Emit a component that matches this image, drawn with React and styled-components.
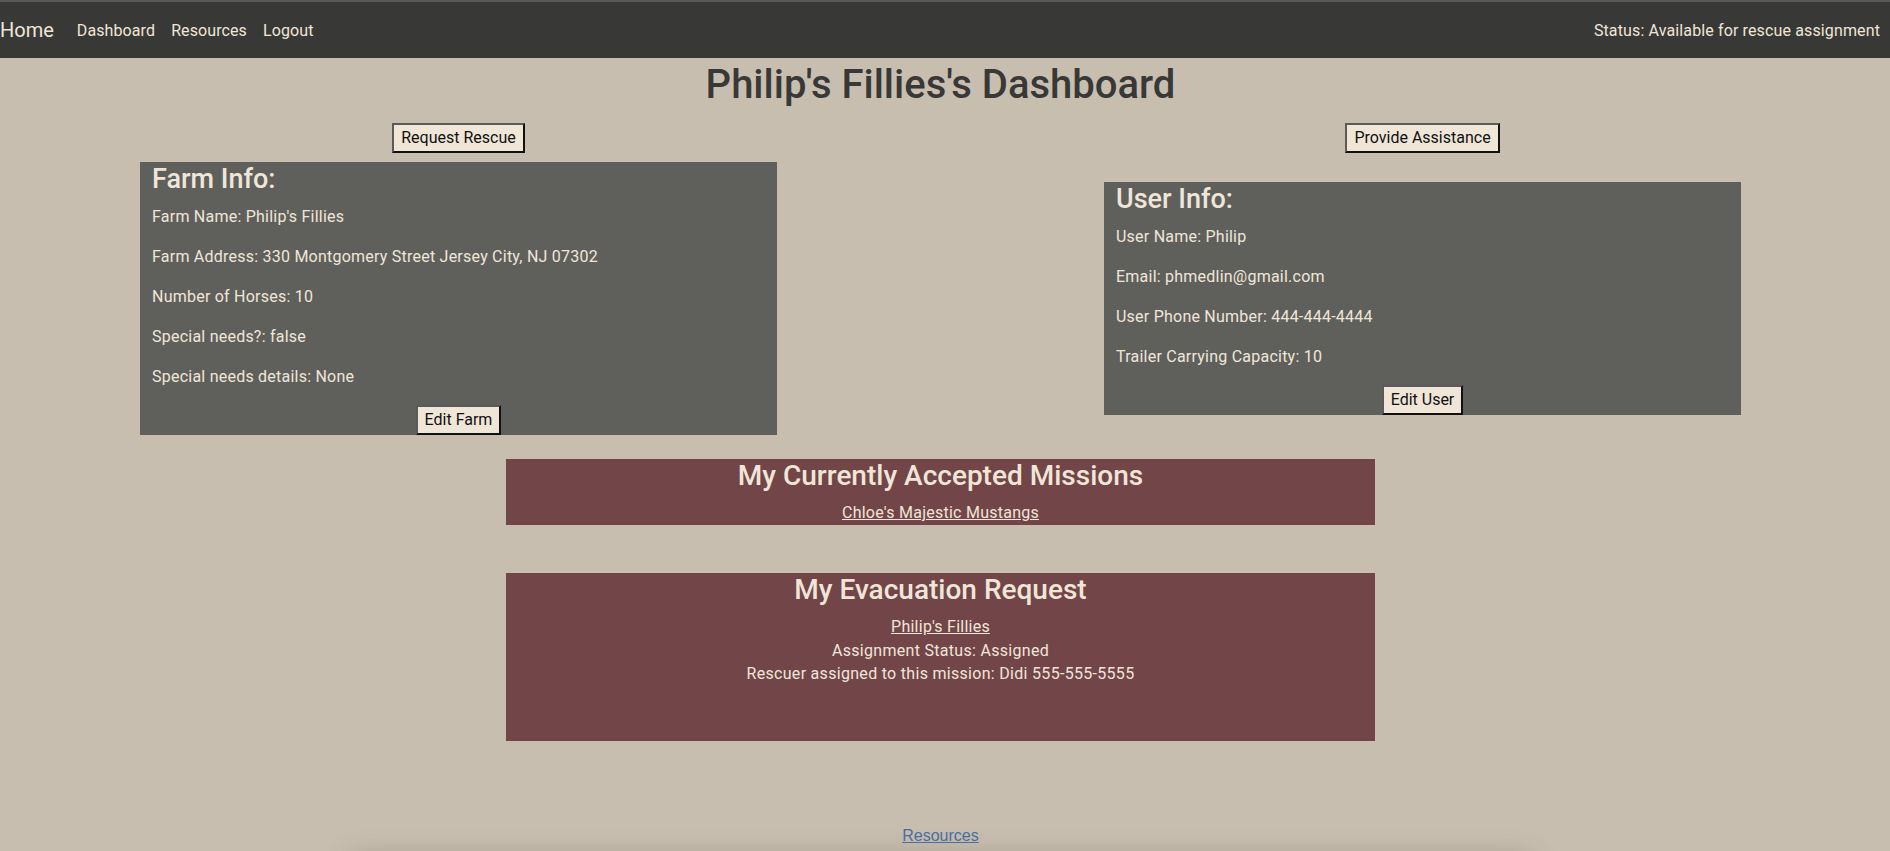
import React from "react";
import styled, { createGlobalStyle } from "styled-components";

const GlobalStyle = createGlobalStyle`
  html, body {
    margin: 0;
    padding: 0;
    background: #c8beb0;
    font-family: Roboto, "Liberation Sans", sans-serif;
    color: #f0e6d8;
  }
`;

const Page = styled.div`
  min-height: 100vh;
  overflow: hidden;
`;

const Nav = styled.nav`
  display: flex;
  align-items: center;
  height: 56px;
  background: #383836;
  border-top: 2px solid #5a5a5c;
  padding-right: 10px;
`;

const Brand = styled.a`
  font-size: 20px;
  color: #f0e6d8;
  text-decoration: none;
  margin-right: 23px;
`;

const NavLink = styled.a`
  font-size: 16px;
  letter-spacing: 0.1px;
  color: #f0e6d8;
  text-decoration: none;
  margin-right: 16px;
`;

const Status = styled.span`
  margin-left: auto;
  font-size: 16px;
  letter-spacing: 0.13px;
`;

const Main = styled.main`
  width: calc(100% - 9px);
  display: flex;
  flex-direction: column;
  align-items: center;
`;

const Title = styled.h1`
  margin: 2px 0 0;
  font-size: 40px;
  line-height: 50px;
  font-weight: 500;
  color: #383836;
`;

const InfoGrid = styled.div`
  align-self: stretch;
  display: grid;
  grid-template-columns: 637px 637px;
  justify-content: space-between;
  row-gap: 9px;
  padding: 0 140px;
  margin-top: 13px;
`;

const Button = styled.button`
  justify-self: center;
  align-self: center;
  font-family: Roboto, "Liberation Sans", sans-serif;
  font-size: 16px;
  line-height: 18px;
  padding: 4px 7px;
  color: #111;
  background: #efe6d8;
  border: 2px solid;
  border-color: #5a5a5a #111 #111 #5a5a5a;
  cursor: pointer;
`;

const Card = styled.section`
  align-self: center;
  background: #5f605c;
  padding: 0 12px;
`;

const CardTitle = styled.h2`
  margin: 0;
  font-size: 27px;
  line-height: 34px;
  font-weight: 500;
`;

const Field = styled.p`
  margin: 16px 0;
  font-size: 16px;
  line-height: 24px;
  letter-spacing: 0.23px;

  &:first-of-type {
    margin-top: 9px;
  }
`;

const CardActions = styled.div`
  display: flex;
  justify-content: center;
`;

const Panel = styled.section`
  width: 869px;
  margin-top: ${({ $top }) => $top}px;
  padding-bottom: ${({ $bottom }) => $bottom}px;
  background: #724548;
  display: flex;
  flex-direction: column;
  align-items: center;
  text-align: center;
`;

const PanelTitle = styled.h2`
  margin: 0 0 9px;
  font-size: 28px;
  line-height: 33px;
  font-weight: 500;
`;

const PanelLink = styled.a`
  font-size: 16px;
  line-height: 24px;
  letter-spacing: 0.25px;
  color: #f0e6d8;
  text-decoration: underline;
`;

const PanelText = styled.div`
  font-size: 16px;
  line-height: 23px;
  letter-spacing: 0.3px;
`;

const Resources = styled.div`
  margin-top: 83px;
  display: flex;
  justify-content: center;
`;

const FooterLink = styled.a`
  font-family: "Liberation Sans", sans-serif;
  font-size: 16px;
  line-height: 24px;
  color: #4a6fa5;
  text-decoration: underline;
`;

const Footer = styled.footer`
  width: 1180px;
  height: 60px;
  margin-top: 10px;
  background: #c4baab;
  box-shadow: 0 0 28px rgba(70, 55, 40, 0.3);
`;

const farm = [
  "Farm Name: Philip's Fillies",
  "Farm Address: 330 Montgomery Street Jersey City, NJ 07302",
  "Number of Horses: 10",
  "Special needs?: false",
  "Special needs details: None",
];

const user = [
  "User Name: Philip",
  "Email: phmedlin@gmail.com",
  "User Phone Number: 444-444-4444",
  "Trailer Carrying Capacity: 10",
];

const App = () => {
  return (
    <Page>
      <GlobalStyle />
      <Nav>
        <Brand href="#">Home</Brand>
        <NavLink href="#">Dashboard</NavLink>
        <NavLink href="#">Resources</NavLink>
        <NavLink href="#">Logout</NavLink>
        <Status>Status: Available for rescue assignment</Status>
      </Nav>
      <Main>
        <Title>Philip's Fillies's Dashboard</Title>
        <InfoGrid>
          <Button>Request Rescue</Button>
          <Button>Provide Assistance</Button>
          <Card>
            <CardTitle>Farm Info:</CardTitle>
            {farm.map((f) => (
              <Field key={f}>{f}</Field>
            ))}
            <CardActions>
              <Button>Edit Farm</Button>
            </CardActions>
          </Card>
          <Card>
            <CardTitle>User Info:</CardTitle>
            {user.map((u) => (
              <Field key={u}>{u}</Field>
            ))}
            <CardActions>
              <Button>Edit User</Button>
            </CardActions>
          </Card>
        </InfoGrid>
        <Panel $top={24} $bottom={0}>
          <PanelTitle>My Currently Accepted Missions</PanelTitle>
          <PanelLink href="#">Chloe's Majestic Mustangs</PanelLink>
        </Panel>
        <Panel $top={48} $bottom={56}>
          <PanelTitle>My Evacuation Request</PanelTitle>
          <PanelLink href="#">Philip's Fillies</PanelLink>
          <PanelText>Assignment Status: Assigned</PanelText>
          <PanelText>Rescuer assigned to this mission: Didi 555-555-5555</PanelText>
        </Panel>
        <Resources>
          <FooterLink href="#">Resources</FooterLink>
        </Resources>
        <Footer />
      </Main>
    </Page>
  );
};

export default App;
